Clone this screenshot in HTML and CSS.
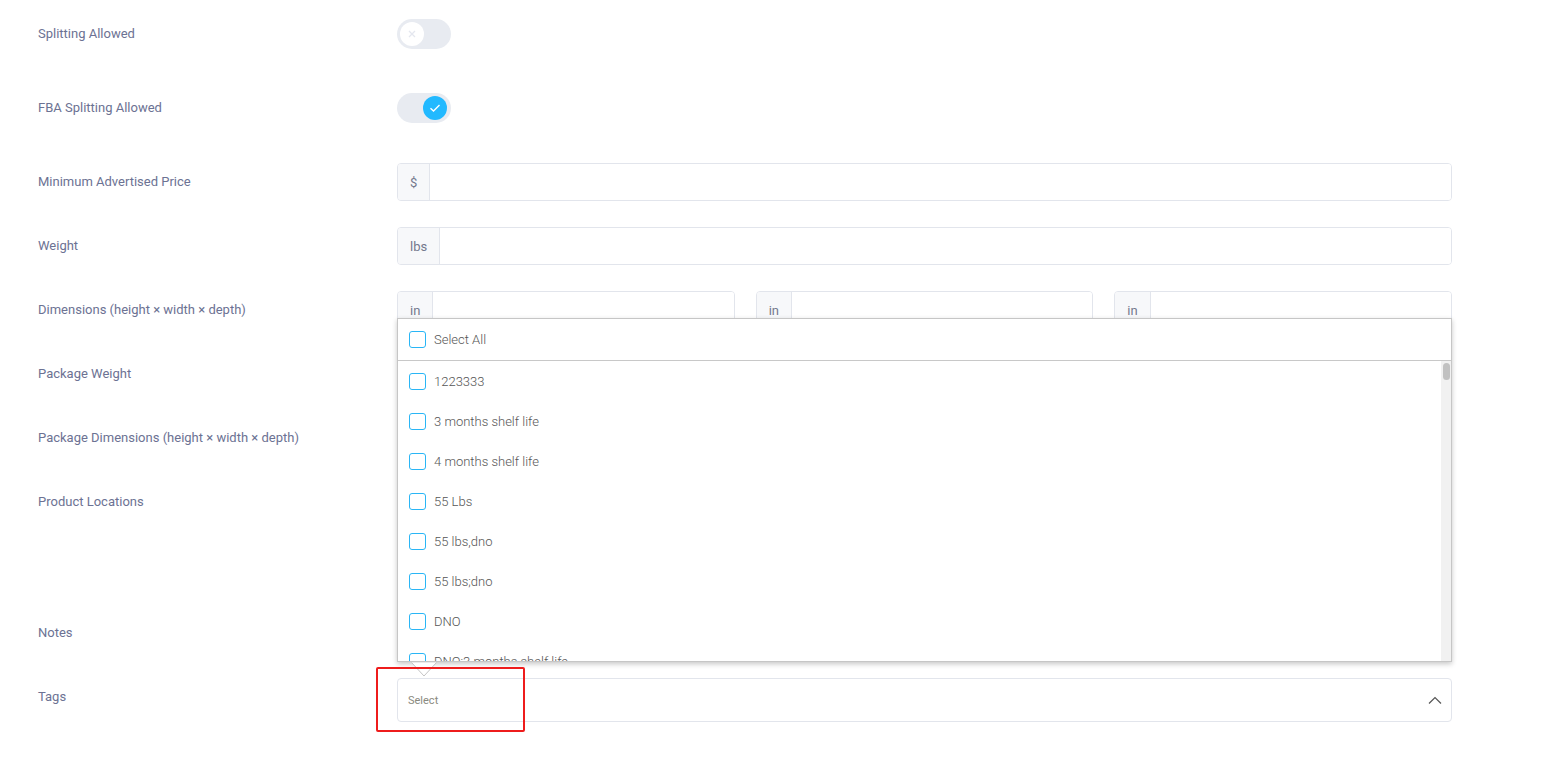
FILE: index.html
```html
<!doctype html>
<html lang="en">
<head>
    <meta charset="UTF-8">
    <title>Product details</title>
    <link rel="stylesheet" href="styles.css">
</head>
<body>
<div class="form">
    <div class="row row-switch">
        <label class="label">Splitting Allowed</label>
        <div class="control">
            <span class="switch">
                <span class="knob">
                    <svg width="10" height="10" viewBox="0 0 10 10"><path d="M2 2L8 8M8 2L2 8" stroke="#e4e7ef" stroke-width="1.3" fill="none"/></svg>
                </span>
            </span>
        </div>
    </div>
    <div class="row row-switch row-last-switch">
        <label class="label">FBA Splitting Allowed</label>
        <div class="control">
            <span class="switch on">
                <span class="knob">
                    <svg width="12" height="10" viewBox="0 0 12 10"><path d="M1.5 5.2L4.5 8L10.5 2" stroke="#fff" stroke-width="1.4" fill="none"/></svg>
                </span>
            </span>
        </div>
    </div>
    <div class="row">
        <label class="label">Minimum Advertised Price</label>
        <div class="input-group"><span class="addon">$</span><input type="text"></div>
    </div>
    <div class="row">
        <label class="label">Weight</label>
        <div class="input-group"><span class="addon">lbs</span><input type="text"></div>
    </div>
    <div class="row">
        <label class="label">Dimensions (height × width × depth)</label>
        <div class="triple">
            <div class="input-group"><span class="addon">in</span><input type="text"></div>
            <div class="input-group"><span class="addon">in</span><input type="text"></div>
            <div class="input-group"><span class="addon">in</span><input type="text"></div>
        </div>
    </div>
    <div class="row">
        <label class="label">Package Weight</label>
        <div class="input-group"><span class="addon">lbs</span><input type="text"></div>
    </div>
    <div class="row">
        <label class="label">Package Dimensions (height × width × depth)</label>
        <div class="triple">
            <div class="input-group"><span class="addon">in</span><input type="text"></div>
            <div class="input-group"><span class="addon">in</span><input type="text"></div>
            <div class="input-group"><span class="addon">in</span><input type="text"></div>
        </div>
    </div>
    <div class="row">
        <label class="label">Product Locations</label>
        <div class="locations">
            <div class="input-group"><input type="text"></div>
            <div class="input-group"><input type="text"></div>
        </div>
    </div>
    <div class="row">
        <label class="label">Notes</label>
        <div class="input-group"><input type="text"></div>
    </div>
    <div class="row">
        <label class="label">Tags</label>
        <div class="tags">
            <div class="dropdown">
                <div class="dd-head">
                    <span class="check"></span>Select All
                </div>
                <div class="dd-body">
                    <ul class="dd-items">
                        <li><span class="check"></span>1223333</li>
                        <li><span class="check"></span>3 months shelf life</li>
                        <li><span class="check"></span>4 months shelf life</li>
                        <li><span class="check"></span>55 Lbs</li>
                        <li><span class="check"></span>55 lbs,dno</li>
                        <li><span class="check"></span>55 lbs;dno</li>
                        <li><span class="check"></span>DNO</li>
                        <li><span class="check"></span>DNO;3 months shelf life</li>
                        <li><span class="check"></span>DNO;4 months shelf life</li>
                    </ul>
                    <div class="dd-track"><div class="dd-thumb"></div></div>
                </div>
            </div>
            <svg class="caret" width="26" height="15" viewBox="0 0 26 15"><path d="M0.5 0.5L13 14L25.5 0.5" fill="#fff" stroke="#c4c4c4" stroke-width="1"/></svg>
            <div class="select">
                <span class="placeholder">Select</span>
                <svg width="14" height="8" viewBox="0 0 14 8"><path d="M1 7.5L7 1.5L13 7.5" stroke="#555" stroke-width="1.2" fill="none"/></svg>
            </div>
            <div class="highlight"></div>
        </div>
    </div>
</div>
</body>
</html>
```

FILE: styles.css
```css
*{
    margin: 0;
    padding: 0;
    box-sizing: border-box;
}
body{
    background: #fff;
    font-family: Roboto, "Liberation Sans", sans-serif;
    font-size: 13px;
    color: #6c7293;
}
ul{
    list-style: none;
}
.form{
    padding: 9.5px 90px 60px 38px;
}
.row{
    display: grid;
    grid-template-columns: 359px 1fr;
    align-items: start;
    margin-bottom: 26px;
}
.label{
    line-height: 38px;
    color: #6c7293;
}
.row-switch{
    height: 48px;
    align-items: center;
}
.row-switch .label{
    line-height: 48px;
}
.row-last-switch{
    margin-bottom: 31.5px;
}
.control{
    display: flex;
    align-items: center;
    height: 48px;
}
.switch{
    display: block;
    position: relative;
    width: 54px;
    height: 30px;
    border-radius: 15px;
    background: #e8ebf1;
}
.knob{
    position: absolute;
    top: 3px;
    left: 3px;
    width: 24px;
    height: 24px;
    border-radius: 50%;
    background: #fff;
    display: flex;
    align-items: center;
    justify-content: center;
}
.switch.on .knob{
    left: 26px;
    background: #22b9ff;
}
.input-group{
    display: flex;
    height: 38px;
    border: 1px solid #e2e5ec;
    border-radius: 4px;
    overflow: hidden;
    background: #fff;
}
.addon{
    display: flex;
    align-items: center;
    padding: 0 12px;
    background: #f7f8fa;
    border-right: 1px solid #e2e5ec;
    color: #74788d;
}
.input-group input{
    flex: 1;
    border: 0;
    outline: 0;
    min-width: 0;
}
.triple{
    display: grid;
    grid-template-columns: 1fr 1fr 1fr;
    gap: 21px;
}
.locations{
    display: flex;
    flex-direction: column;
    gap: 29px;
}
.tags{
    position: relative;
}
.select{
    display: flex;
    align-items: center;
    justify-content: space-between;
    height: 44px;
    padding: 0 9px 0 10px;
    border: 1px solid #e2e5ec;
    border-radius: 4px;
}
.placeholder{
    font-size: 11px;
    color: #8a8a80;
}
.dropdown{
    position: absolute;
    left: 0;
    right: 0;
    bottom: calc(100% + 16px);
    background: #fff;
    border: 1px solid #c6c6c6;
    box-shadow: 0 2px 5px rgba(0, 0, 0, 0.22);
    z-index: 2;
    font-weight: 300;
    color: #555;
}
.dd-head{
    display: flex;
    align-items: center;
    height: 42px;
    padding-left: 11px;
    border-bottom: 1px solid #c8c8c8;
}
.dd-body{
    display: flex;
    height: 300px;
}
.dd-items{
    flex: 1;
    overflow: hidden;
}
.dd-items li{
    display: flex;
    align-items: center;
    height: 40px;
    padding-left: 11px;
}
.check{
    width: 17px;
    height: 17px;
    margin-right: 8px;
    border: 1px solid #29b6f6;
    border-radius: 3px;
    background: #fff;
}
.dd-track{
    width: 10px;
    padding: 2px 1px 0 2px;
    background: #f1f1f1;
}
.dd-thumb{
    height: 17px;
    border-radius: 4px;
    background: #c1c1c1;
}
.caret{
    position: absolute;
    left: 14px;
    top: -16px;
    z-index: 3;
}
.highlight{
    position: absolute;
    left: -21px;
    top: -11px;
    width: 149px;
    height: 65px;
    border: 2px solid #ee1c1c;
    border-radius: 2px;
    z-index: 4;
}
```
